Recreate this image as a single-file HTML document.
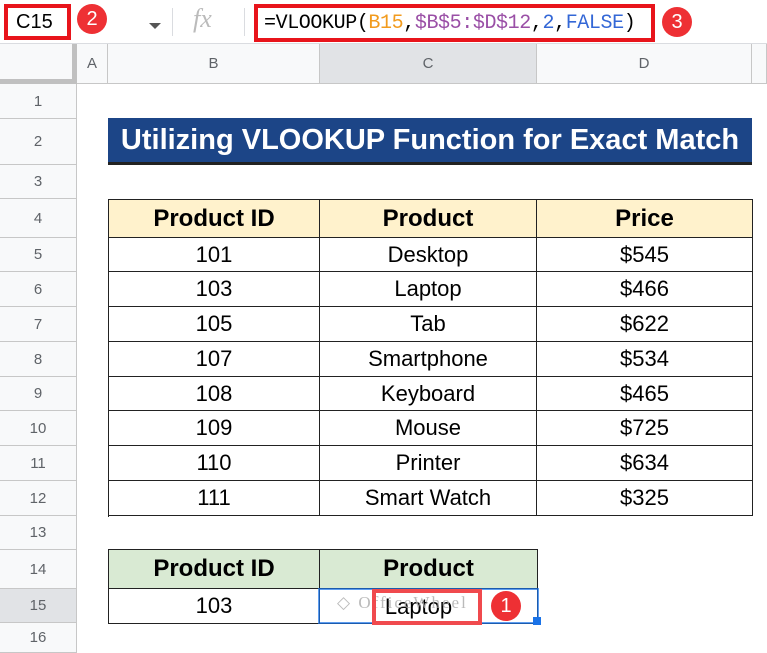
<!DOCTYPE html>
<html><head><meta charset="utf-8"><style>
body{margin:0;width:767px;height:643px;overflow:hidden;background:#fff;font-family:"Liberation Sans",Arial,sans-serif;position:relative}
div{position:absolute;box-sizing:border-box}
.rh{left:0;width:77px;background:#f8f9fa;border-bottom:1px solid #c7c7c7;border-right:1px solid #c7c7c7;color:#5f6368;font-size:15px;display:flex;align-items:center;justify-content:center}
.ch{top:44px;height:40px;background:#f8f9fa;border-right:1px solid #c7c7c7;border-bottom:1px solid #c7c7c7;color:#5f6368;font-size:15px;display:flex;align-items:center;justify-content:center}
.c{display:flex;align-items:center;justify-content:center;font-size:22px;color:#000;border-right:1.5px solid #222;border-bottom:1.5px solid #222}
.h{font-weight:bold;font-size:24px}
.circ{width:30px;height:30px;border-radius:50%;background:#ee3034;color:#fff;font-size:20px;display:flex;align-items:center;justify-content:center}
.red{border:4px solid #e8141b}
</style></head><body>
<div style="left:0;top:0;width:767px;height:44px;border-bottom:1px solid #dadce0"></div>
<div class="red" style="left:4px;top:4px;width:67px;height:36px;font-size:20px;padding:3px 0 0 8px">C15</div>
<div class="circ" style="left:77px;top:4px">2</div>
<div style="left:149px;top:23px;width:0;height:0;border-left:6px solid transparent;border-right:6px solid transparent;border-top:6px solid #555"></div>
<div style="left:172px;top:8px;width:1px;height:28px;background:#dadce0"></div>
<div style="left:193px;top:4px;font-family:'Liberation Serif',serif;font-style:italic;font-size:26px;color:#bbb">fx</div>
<div style="left:244px;top:8px;width:1px;height:28px;background:#dadce0"></div>
<div class="red" style="left:254px;top:4px;width:401px;height:38px;font-family:'Liberation Mono',monospace;font-size:20px;padding:4px 0 0 6px;letter-spacing:-0.4px">=VLOOKUP(<span style="color:#f29b1d">B15</span>,<span style="color:#9a4fa6">$B$5:$D$12</span>,<span style="color:#3367d6">2</span>,<span style="color:#3367d6">FALSE</span>)</div>
<div class="circ" style="left:662px;top:7px">3</div>
<div style="left:0;top:44px;width:77px;height:40px;background:#f8f9fa;border-right:5px solid #c0c0c0;border-bottom:5px solid #c0c0c0"></div>
<div class="ch" style="left:77px;width:31px">A</div>
<div class="ch" style="left:108px;width:212px">B</div>
<div class="ch" style="left:320px;width:217px;background:#e1e3e6">C</div>
<div class="ch" style="left:537px;width:215px">D</div>
<div class="ch" style="left:752px;width:15px"></div>
<div class="rh" style="top:84px;height:35px">1</div>
<div class="rh" style="top:119px;height:46px">2</div>
<div class="rh" style="top:165px;height:34px">3</div>
<div class="rh" style="top:199px;height:39px">4</div>
<div class="rh" style="top:238px;height:34px">5</div>
<div class="rh" style="top:272px;height:35px">6</div>
<div class="rh" style="top:307px;height:35px">7</div>
<div class="rh" style="top:342px;height:35px">8</div>
<div class="rh" style="top:377px;height:34px">9</div>
<div class="rh" style="top:411px;height:35px">10</div>
<div class="rh" style="top:446px;height:35px">11</div>
<div class="rh" style="top:481px;height:35px">12</div>
<div class="rh" style="top:516px;height:34px">13</div>
<div class="rh" style="top:550px;height:39px">14</div>
<div class="rh" style="top:589px;height:34px;background:#e1e3e6">15</div>
<div class="rh" style="top:623px;height:30px">16</div>
<div style="left:108px;top:118px;width:644px;height:47px;background:#1c4587;border-bottom:3px solid #222;color:#fff;font-weight:bold;font-size:29px;display:flex;align-items:center;justify-content:center">Utilizing VLOOKUP Function for Exact Match</div>
<div style="left:108px;top:199px;width:645px;height:318px;border-left:1.5px solid #222;border-top:1.5px solid #222"></div>
<div class="c h" style="left:109px;top:200px;width:211px;height:38px;background:#fff2cc">Product ID</div>
<div class="c h" style="left:320px;top:200px;width:217px;height:38px;background:#fff2cc">Product</div>
<div class="c h" style="left:537px;top:200px;width:216px;height:38px;background:#fff2cc">Price</div>
<div class="c" style="left:109px;top:238px;width:211px;height:34px">101</div><div class="c" style="left:320px;top:238px;width:217px;height:34px">Desktop</div><div class="c" style="left:537px;top:238px;width:216px;height:34px">$545</div>
<div class="c" style="left:109px;top:272px;width:211px;height:35px">103</div><div class="c" style="left:320px;top:272px;width:217px;height:35px">Laptop</div><div class="c" style="left:537px;top:272px;width:216px;height:35px">$466</div>
<div class="c" style="left:109px;top:307px;width:211px;height:35px">105</div><div class="c" style="left:320px;top:307px;width:217px;height:35px">Tab</div><div class="c" style="left:537px;top:307px;width:216px;height:35px">$622</div>
<div class="c" style="left:109px;top:342px;width:211px;height:35px">107</div><div class="c" style="left:320px;top:342px;width:217px;height:35px">Smartphone</div><div class="c" style="left:537px;top:342px;width:216px;height:35px">$534</div>
<div class="c" style="left:109px;top:377px;width:211px;height:34px">108</div><div class="c" style="left:320px;top:377px;width:217px;height:34px">Keyboard</div><div class="c" style="left:537px;top:377px;width:216px;height:34px">$465</div>
<div class="c" style="left:109px;top:411px;width:211px;height:35px">109</div><div class="c" style="left:320px;top:411px;width:217px;height:35px">Mouse</div><div class="c" style="left:537px;top:411px;width:216px;height:35px">$725</div>
<div class="c" style="left:109px;top:446px;width:211px;height:35px">110</div><div class="c" style="left:320px;top:446px;width:217px;height:35px">Printer</div><div class="c" style="left:537px;top:446px;width:216px;height:35px">$634</div>
<div class="c" style="left:109px;top:481px;width:211px;height:35px">111</div><div class="c" style="left:320px;top:481px;width:217px;height:35px">Smart Watch</div><div class="c" style="left:537px;top:481px;width:216px;height:35px">$325</div>
<div style="left:108px;top:549px;width:430px;height:75px;border-left:1.5px solid #222;border-top:1.5px solid #222"></div>
<div class="c h" style="left:109px;top:550px;width:211px;height:39px;background:#d9ead3">Product ID</div>
<div class="c h" style="left:320px;top:550px;width:218px;height:39px;background:#d9ead3">Product</div>
<div class="c" style="left:109px;top:589px;width:211px;height:35px">103</div>
<div class="c" style="left:320px;top:589px;width:218px;height:35px;padding-right:20px;padding-top:2px">Laptop</div>
<div style="left:318px;top:588px;width:221px;height:36px;border:2px solid #1a73e8;opacity:.7"></div>
<div style="left:533px;top:617px;width:8px;height:8px;background:#1a73e8"></div>
<div style="left:337px;top:593px;font-family:'Liberation Serif',serif;font-size:17px;color:#aaa;letter-spacing:2px;opacity:.8">◇ OfficeWheel</div>
<div class="red" style="left:372px;top:589px;width:110px;height:36px;border-color:#f04a4e"></div>
<div class="circ" style="left:491px;top:591px">1</div>
</body></html>
